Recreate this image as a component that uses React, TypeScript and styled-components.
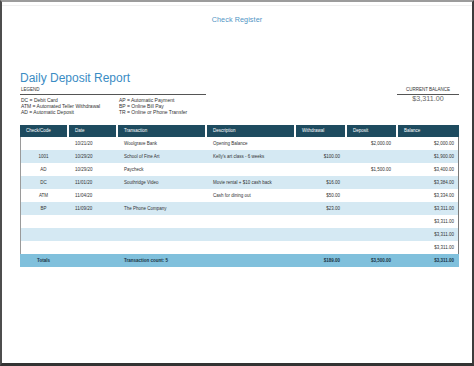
import React from "react";
import styled, { createGlobalStyle } from "styled-components";

const GlobalStyle = createGlobalStyle`
  html, body {
    margin: 0;
    padding: 0;
    background: #ffffff;
  }
  body {
    font-family: "Liberation Sans", Arial, sans-serif;
  }
`;

type Row = {
  code: string;
  date: string;
  transaction: string;
  description: string;
  withdrawal: string;
  deposit: string;
  balance: string;
};

const rows: Row[] = [
  { code: "", date: "10/21/20", transaction: "Woolgrave Bank", description: "Opening Balance", withdrawal: "", deposit: "$2,000.00", balance: "$2,000.00" },
  { code: "1001", date: "10/29/20", transaction: "School of Fine Art", description: "Kelly's art class - 6 weeks", withdrawal: "$100.00", deposit: "", balance: "$1,900.00" },
  { code: "AD", date: "10/29/20", transaction: "Paycheck", description: "", withdrawal: "", deposit: "$1,500.00", balance: "$3,400.00" },
  { code: "DC", date: "11/01/20", transaction: "Southridge Video", description: "Movie rental + $10 cash back", withdrawal: "$16.00", deposit: "", balance: "$3,384.00" },
  { code: "ATM", date: "11/04/20", transaction: "", description: "Cash for dining out", withdrawal: "$50.00", deposit: "", balance: "$3,334.00" },
  { code: "BP", date: "11/09/20", transaction: "The Phone Company", description: "", withdrawal: "$23.00", deposit: "", balance: "$3,311.00" },
  { code: "", date: "", transaction: "", description: "", withdrawal: "", deposit: "", balance: "$3,311.00" },
  { code: "", date: "", transaction: "", description: "", withdrawal: "", deposit: "", balance: "$3,311.00" },
  { code: "", date: "", transaction: "", description: "", withdrawal: "", deposit: "", balance: "$3,311.00" },
];

const legendLeft = ["DC = Debit Card", "ATM = Automated Teller Withdrawal", "AD = Automatic Deposit"];
const legendRight = ["AP = Automatic Payment", "BP = Online Bill Pay", "TR = Online or Phone Transfer"];

const COLUMNS = "47px 47px 87px 87px 49px 49px 61px";

export default function App() {
  return (
    <>
      <GlobalStyle />
      <Frame>
        <TopRule />
        <PageTitle>Check Register</PageTitle>
        <Content>
          <ReportTitle>Daily Deposit Report</ReportTitle>
          <LegendBar>
            <LegendBlock>
              <SmallLabel>LEGEND</SmallLabel>
              <LegendGrid>
                <LegendColumn>
                  {legendLeft.map((l) => <LegendLine key={l}>{l}</LegendLine>)}
                </LegendColumn>
                <LegendColumn>
                  {legendRight.map((l) => <LegendLine key={l}>{l}</LegendLine>)}
                </LegendColumn>
              </LegendGrid>
            </LegendBlock>
            <BalanceBlock>
              <SmallLabel $center>CURRENT BALANCE</SmallLabel>
              <BalanceValue>$3,311.00</BalanceValue>
            </BalanceBlock>
          </LegendBar>

          <Table>
            <HeaderRow>
              <HeadCell>Check/Code</HeadCell>
              <HeadCell>Date</HeadCell>
              <HeadCell>Transaction</HeadCell>
              <HeadCell>Description</HeadCell>
              <HeadCell>Withdrawal</HeadCell>
              <HeadCell>Deposit</HeadCell>
              <HeadCell>Balance</HeadCell>
            </HeaderRow>
            {rows.map((r, i) => (
              <BodyRow key={i} $striped={i % 2 === 1}>
                <Cell $align="center">{r.code}</Cell>
                <Cell>{r.date}</Cell>
                <Cell>{r.transaction}</Cell>
                <Cell>{r.description}</Cell>
                <Cell $align="right">{r.withdrawal}</Cell>
                <Cell $align="right">{r.deposit}</Cell>
                <Cell $align="right">{r.balance}</Cell>
              </BodyRow>
            ))}
            <TotalRow>
              <TotalCell $align="center">Totals</TotalCell>
              <TotalCell />
              <TotalCell>Transaction count: 5</TotalCell>
              <TotalCell />
              <TotalCell $align="right">$189.00</TotalCell>
              <TotalCell $align="right">$3,500.00</TotalCell>
              <TotalCell $align="right">$3,311.00</TotalCell>
            </TotalRow>
          </Table>
        </Content>
      </Frame>
    </>
  );
}

const Frame = styled.div`
  box-sizing: border-box;
  width: 474px;
  height: 366px;
  border-top: 2px solid #9c9c9c;
  border-left: 2px solid #4d4d4d;
  border-right: 2px solid #3c3c3c;
  border-bottom: 3px solid #333333;
  background: #ffffff;
  display: flex;
  flex-direction: column;
  overflow: hidden;
`;

const TopRule = styled.div`
  height: 1px;
  margin-top: 3px;
  background: #f0f0f0;
`;

const PageTitle = styled.div`
  margin-top: 10px;
  text-align: center;
  font-size: 7.2px;
  line-height: 8px;
  color: #4f94c4;
  letter-spacing: 0.1px;
`;

const Content = styled.div`
  width: 439px;
  margin-left: 18px;
  display: flex;
  flex-direction: column;
`;

const ReportTitle = styled.div`
  margin-top: 47px;
  font-size: 12px;
  line-height: 14px;
  color: #3a8cc4;
`;

const LegendBar = styled.div`
  margin-top: 2px;
  display: flex;
  justify-content: space-between;
  align-items: flex-start;
`;

const LegendBlock = styled.div`
  width: 186px;
  display: flex;
  flex-direction: column;
`;

const SmallLabel = styled.div<{ $center?: boolean }>`
  font-size: 4.5px;
  line-height: 6px;
  color: #333333;
  padding-left: ${(p) => (p.$center ? "0" : "1px")};
  text-align: ${(p) => (p.$center ? "center" : "left")};
  border-bottom: 1px solid #555555;
  padding-bottom: 1px;
`;

const LegendGrid = styled.div`
  display: grid;
  grid-template-columns: 98px 1fr;
  padding-top: 2px;
  padding-left: 1px;
`;

const LegendColumn = styled.div`
  display: flex;
  flex-direction: column;
`;

const LegendLine = styled.div`
  font-size: 5px;
  line-height: 6.2px;
  color: #333333;
  white-space: nowrap;
`;

const BalanceBlock = styled.div`
  width: 62px;
  display: flex;
  flex-direction: column;
`;

const BalanceValue = styled.div`
  font-size: 7.2px;
  line-height: 8px;
  color: #666666;
  text-align: center;
`;

const Table = styled.div`
  margin-top: 9px;
  display: flex;
  flex-direction: column;
`;

const HeaderRow = styled.div`
  display: grid;
  grid-template-columns: ${COLUMNS};
  column-gap: 2px;
  height: 12px;
`;

const HeadCell = styled.div`
  background: #1e4b5f;
  color: #ffffff;
  font-size: 4.5px;
  line-height: 12px;
  padding-left: 6px;
  white-space: nowrap;
  overflow: hidden;
`;

const BodyRow = styled.div<{ $striped: boolean }>`
  display: grid;
  grid-template-columns: ${COLUMNS};
  column-gap: 2px;
  height: 13px;
  background: ${(p) => (p.$striped ? "#d5e9f3" : "#ffffff")};
  box-shadow: inset 1px 0 0 #9a9a9a, inset -1px 0 0 #7a7a7a;
`;

const Cell = styled.div<{ $align?: "left" | "center" | "right" }>`
  font-size: 4.5px;
  line-height: 13px;
  color: #333333;
  white-space: nowrap;
  overflow: hidden;
  text-align: ${(p) => p.$align || "left"};
  padding: ${(p) => (p.$align === "right" ? "0 5px 0 0" : p.$align === "center" ? "0" : "0 0 0 6px")};
`;

const TotalRow = styled.div`
  display: grid;
  grid-template-columns: ${COLUMNS};
  column-gap: 2px;
  height: 13px;
  background: #80c0dc;
`;

const TotalCell = styled(Cell)`
  font-weight: bold;
  color: #1b3445;
`;
